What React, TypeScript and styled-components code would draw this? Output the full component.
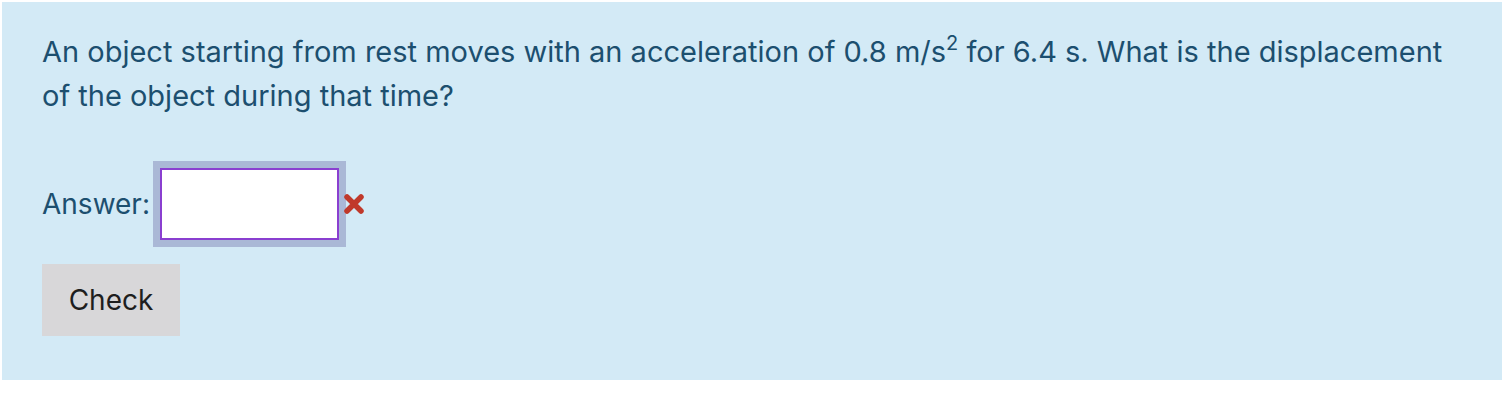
import React from 'react';
import styled, { createGlobalStyle } from 'styled-components';

const GlobalStyle = createGlobalStyle`
  body {
    margin: 0;
    background: #ffffff;
    font-family: Inter, "Noto Sans", "Liberation Sans", sans-serif;
  }
`;

function App() {
  return (
    <>
      <GlobalStyle />
      <Panel>
        <QuestionText>
          An object starting from rest moves with an acceleration of 0.8 m/s<Sup>2</Sup> for 6.4 s.
          What is the displacement of the object during that time?
        </QuestionText>
        <AnswerRow>
          <Label htmlFor="answer">Answer:</Label>
          <InputRing>
            <AnswerInput id="answer" type="text" />
          </InputRing>
          <WrongIcon viewBox="0 0 22 22" aria-label="Incorrect">
            <path d="M4 4 L18 18 M18 4 L4 18" />
          </WrongIcon>
        </AnswerRow>
        <CheckButton>Check</CheckButton>
      </Panel>
    </>
  );
}

const Panel = styled.div`
  margin: 2px 6px 0 2px;
  height: 378px;
  box-sizing: border-box;
  background-color: #d3eaf6;
  padding: 28px 40px 0 40px;
  color: #1c4f6f;
`;

const QuestionText = styled.p`
  margin: 0;
  font-size: 29px;
  line-height: 44px;
`;

const Sup = styled.sup`
  font-size: 20px;
  line-height: 0;
  vertical-align: 12px;
`;

const AnswerRow = styled.div`
  display: flex;
  align-items: center;
  margin-top: 43px;
`;

const Label = styled.label`
  font-size: 28px;
  margin-right: 3px;
`;

const InputRing = styled.div`
  background-color: #aab8d6;
  padding: 7px;
  display: flex;
`;

const AnswerInput = styled.input`
  width: 179px;
  height: 72px;
  box-sizing: border-box;
  border: 2px solid #8a3fd0;
  background: #ffffff;
  outline: none;
  font-size: 24px;
`;

const WrongIcon = styled.svg`
  width: 22px;
  height: 22px;
  margin-left: -3px;
  fill: none;
  stroke: #c0392b;
  stroke-width: 5.5;
  stroke-linecap: round;
`;

const CheckButton = styled.button`
  margin-top: 17px;
  width: 138px;
  height: 72px;
  border: 0;
  border-radius: 0;
  background-color: #d8d7d9;
  color: #1e1e1e;
  font-family: Inter, "Noto Sans", "Liberation Sans", sans-serif;
  font-size: 28px;
  padding: 0;
`;

export default App;
